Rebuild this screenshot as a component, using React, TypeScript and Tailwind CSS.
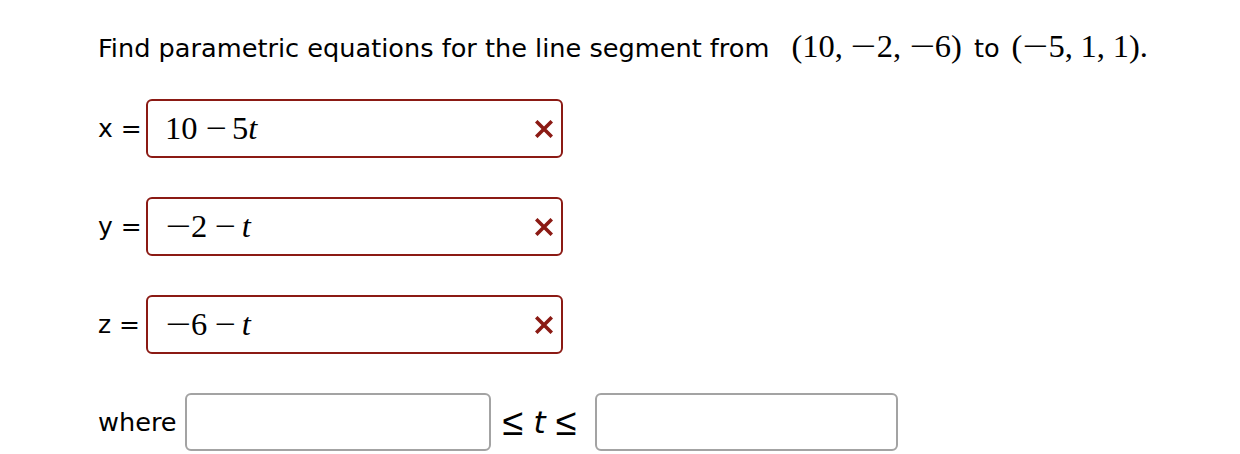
import React from 'react';

const MATH = { fontFamily: '"Liberation Serif", "DejaVu Serif", serif' };

const Cross = () => (
  <svg width="18" height="18" viewBox="0 0 18 18" className="shrink-0">
    <path d="M2.5 2.5 L15.5 15.5 M15.5 2.5 L2.5 15.5" stroke="#8b1a14" strokeWidth="3.6" strokeLinecap="square" />
  </svg>
);

// wide TeX-style minus sign
const Neg = () => (
  <span className="inline-block w-[0.8em] text-center">
    <span className="inline-block scale-x-[1.4]">−</span>
  </span>
);
const Minus = () => (
  <span className="inline-block w-[0.5em] mx-[0.28em] text-center">
    <span className="inline-block scale-x-[1.15]">−</span>
  </span>
);
const Comma = () => <span className="mr-[0.24em]">,</span>;

const AnswerRow = ({ label, children }: { label: string; children: React.ReactNode }) => (
  <div className="flex items-center">
    <span className="w-[48px] text-[25px] text-black">{label}</span>
    <div className="flex items-center justify-between w-[417px] h-[59px] border-2 border-[#8b1a14] rounded-[6px] pl-[17px] pr-[8px]">
      <span className="text-[32.5px] leading-none text-black" style={MATH}>{children}</span>
      <Cross />
    </div>
  </div>
);

export default function App() {
  return (
    <div
      className="bg-white w-[1240px] h-[454px] pl-[98px] pt-[22px] text-black"
      style={{ fontFamily: '"DejaVu Sans", "Liberation Sans", sans-serif' }}
    >
      <div className="flex items-baseline text-[25.6px] h-[46px]">
        <span>Find parametric equations for the line segment from</span>
        <span className="ml-[22px] text-[32.5px]" style={MATH}>
          (10<Comma /><Neg />2<Comma /><Neg />6)
        </span>
        <span className="ml-[12px]">to</span>
        <span className="ml-[12px] text-[32.5px]" style={MATH}>
          (<Neg />5<Comma />1<Comma />1).
        </span>
      </div>

      <div className="flex flex-col gap-[39px] mt-[31px]">
        <AnswerRow label="x =">
          10<Minus />5<i>t</i>
        </AnswerRow>
        <AnswerRow label="y =">
          <Neg />2<Minus /><i>t</i>
        </AnswerRow>
        <AnswerRow label="z =">
          <Neg />6<Minus /><i>t</i>
        </AnswerRow>

        <div className="flex items-center">
          <span className="text-[25.6px] mr-[8px]">where</span>
          <div className="w-[306px] h-[58px] border-2 border-[#a3a3a3] rounded-[6px]" />
          <span
            className="ml-[12px] mr-[19px] flex items-center text-[38px]"
            style={{ fontFamily: '"Liberation Sans", sans-serif' }}
          >
            <span>≤</span>
            <i className="mx-[10px] text-[31px]" style={{ fontFamily: '"DejaVu Sans", sans-serif' }}>t</i>
            <span>≤</span>
          </span>
          <div className="w-[303px] h-[58px] border-2 border-[#a3a3a3] rounded-[6px]" />
        </div>
      </div>
    </div>
  );
}
